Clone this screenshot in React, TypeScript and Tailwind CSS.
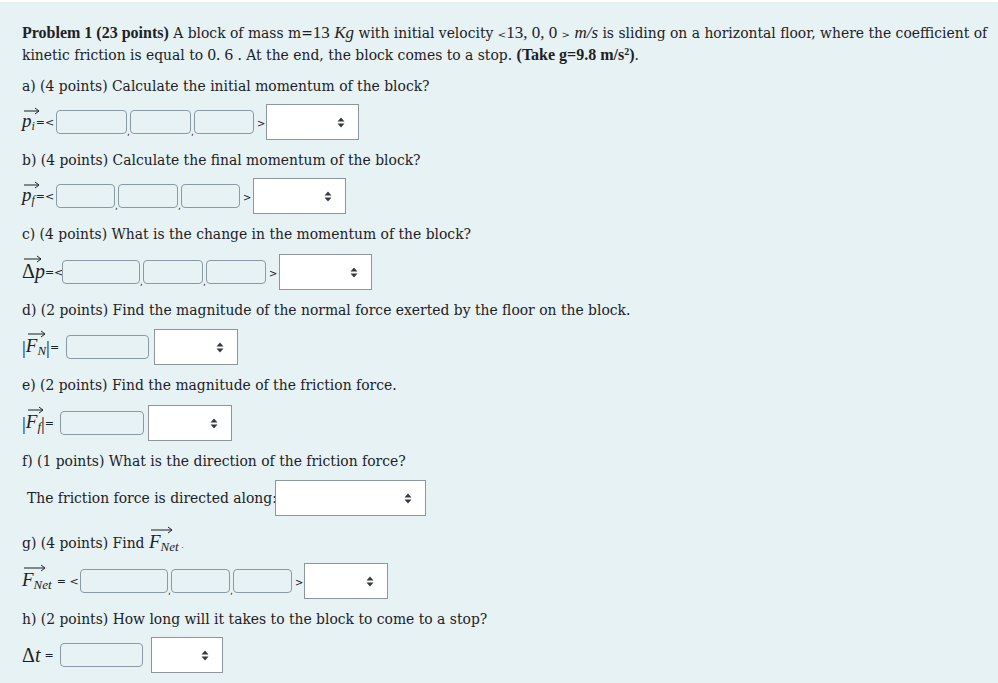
import type { ReactNode } from 'react'

const serif = "font-['DejaVu_Serif',serif]"
const math = "font-['Liberation_Serif',serif] leading-none"
const tmath = "font-['Liberation_Serif',serif] leading-[0] text-[17px]"
const bold = "font-['Liberation_Serif',serif] font-bold text-[16px] leading-[0]"

function Arrow({ w }: { w: number }) {
  return (
    <svg width={w} height="8" viewBox={`0 0 ${w} 8`} className="block">
      <path d={`M0 4 H${w - 1}`} stroke="#1d2125" strokeWidth="1" />
      <path d={`M${w - 5} 1 L${w - 1} 4 L${w - 5} 7`} stroke="#1d2125" strokeWidth="1" fill="none" />
    </svg>
  )
}

function Vec({ children, w, top }: { children: ReactNode; w: number; top: number }) {
  return (
    <span className="relative inline-block">
      <span className="absolute left-[2px]" style={{ top }}>
        <Arrow w={w} />
      </span>
      {children}
    </span>
  )
}

function Box({ w }: { w: number }) {
  return <span className="block h-[24px] rounded-[4px] border border-[#8a9aa4] bg-[#e7f2f5]" style={{ width: w }} />
}

function Comma() {
  return <span className="w-[3px] -mb-[3px] text-[9px] leading-none font-['DejaVu_Sans',sans-serif]">,</span>
}

function Select({ w }: { w: number }) {
  return (
    <span className="flex h-[36px] shrink-0 items-center justify-end border border-[#8f959c] bg-white pr-[13px]" style={{ width: w }}>
      <svg width="8" height="11" viewBox="0 0 8 11">
        <path d="M4 0.5 L7.5 4.5 L0.5 4.5 Z" fill="#343a40" />
        <path d="M4 10.5 L7.5 6.5 L0.5 6.5 Z" fill="#343a40" />
      </svg>
    </span>
  )
}

function Boxes({ boxes }: { boxes: number[] }) {
  return (
    <span className="flex h-[24px] items-end">
      <Box w={boxes[0]} />
      <Comma />
      <Box w={boxes[1]} />
      <Comma />
      <Box w={boxes[2]} />
    </span>
  )
}

function Gt({ w }: { w: number }) {
  return (
    <span className="ml-[3px] mt-[3px] text-[10px] font-['DejaVu_Sans',sans-serif]" style={{ width: w }}>
      &gt;
    </span>
  )
}

const small = "text-[11px] leading-none font-['DejaVu_Sans',sans-serif]"
const label = 'flex shrink-0 items-center whitespace-nowrap'

export default function App() {
  return (
    <div className="min-h-screen bg-white pt-[2px]">
      <div className={`min-h-[681px] bg-[#e7f2f5] pl-[22px] pt-[20px] text-[13.9px] leading-[22px] text-[#1d2125] ${serif}`}>
        {/* Problem statement */}
        <p>
          <b className={bold}>Problem 1 (23 points)</b> A block of mass m=<span className={tmath}>13</span>{' '}
          <i className={tmath}>Kg</i> with initial velocity <span className="text-[10px] leading-[0]">&lt;</span>
          <span className={tmath}>13, 0, 0</span> <span className="text-[10px] leading-[0]">&gt;</span>{' '}
          <i className={tmath}>m/s</i> is sliding on a horizontal floor, where the coefficient of kinetic friction is
          equal to <span className={tmath}>0. 6</span> . At the end, the block comes to a stop.{' '}
          <b className={bold}>
            (Take g=9.8 m/s<sup className="text-[10px]">2</sup>)
          </b>
          .
        </p>

        <p className="mt-[9px] mb-[7px]">a) (4 points) Calculate the initial momentum of the block?</p>
        <div className="flex h-[36px] items-center">
          <span className={`${label} w-[34px]`}>
            <Vec w={16} top={-4}>
              <i className={`${math} text-[19px]`}>
                p<sub className="text-[12px]">i</sub>
              </i>
            </Vec>
            <span className={`${small} ml-[1px]`}>=&lt;</span>
          </span>
          <Boxes boxes={[71, 61, 60]} />
          <Gt w={9} />
          <Select w={93} />
        </div>

        <p className="mt-[9px] mb-[7px]">b) (4 points) Calculate the final momentum of the block?</p>
        <div className="flex h-[36px] items-center">
          <span className={`${label} w-[34px]`}>
            <Vec w={16} top={-4}>
              <i className={`${math} text-[19px]`}>
                p<sub className="text-[12px]">f</sub>
              </i>
            </Vec>
            <span className={`${small} ml-[1px]`}>=&lt;</span>
          </span>
          <Boxes boxes={[59, 60, 59]} />
          <Gt w={10} />
          <Select w={93} />
        </div>

        <p className="mt-[9px] mb-[9px]">c) (4 points) What is the change in the momentum of the block?</p>
        <div className="flex h-[36px] items-center">
          <span className={`${label} w-[40px]`}>
            <Vec w={18} top={-6}>
              <span className={`${math} text-[20px]`}>
                Δ<i>p</i>
              </span>
            </Vec>
            <span className={small}>=&lt;</span>
          </span>
          <Boxes boxes={[78, 60, 60]} />
          <Gt w={10} />
          <Select w={93} />
        </div>

        <p className="mt-[9px] mb-[8px]">d) (2 points) Find the magnitude of the normal force exerted by the floor on the block.</p>
        <div className="flex h-[36px] items-center">
          <span className={`${label} w-[44px]`}>
            <span className={`${math} text-[19px]`}>|</span>
            <Vec w={18} top={-6}>
              <i className={`${math} text-[19px]`}>
                F<sub className="text-[13px]">N</sub>
              </i>
            </Vec>
            <span className={`${math} text-[19px]`}>|</span>
            <span className={small}>=</span>
          </span>
          <Box w={83} />
          <span className="w-[5px]" />
          <Select w={84} />
        </div>

        <p className="mt-[9px] mb-[9px]">e) (2 points) Find the magnitude of the friction force.</p>
        <div className="flex h-[36px] items-center">
          <span className={`${label} w-[38px]`}>
            <span className={`${math} text-[19px]`}>|</span>
            <Vec w={16} top={-6}>
              <i className={`${math} text-[19px]`}>
                F<sub className="text-[13px]">f</sub>
              </i>
            </Vec>
            <span className={`${math} text-[19px]`}>|</span>
            <span className={small}>=</span>
          </span>
          <Box w={84} />
          <span className="w-[4px]" />
          <Select w={84} />
        </div>

        <p className="mt-[9px] mb-[8px]">f) (1 points) What is the direction of the friction force?</p>
        <div className="flex h-[36px] items-center pl-[5px]">
          <span className="w-[248px] shrink-0 whitespace-nowrap">The friction force is directed along:</span>
          <Select w={151} />
        </div>

        <p className="mt-[16px] mb-[6px]">
          g) (4 points) Find{' '}
          <Vec w={22} top={-6}>
            <i className={`${math} text-[19px]`}>
              F<sub className="text-[13px]">Net</sub>
            </i>
          </Vec>
          <span className="text-[8px]"> .</span>
        </p>
        <div className="flex h-[36px] items-center">
          <span className={`${label} w-[58px]`}>
            <Vec w={22} top={-6}>
              <i className={`${math} text-[19px]`}>
                F<sub className="text-[13px]">Net</sub>
              </i>
            </Vec>
            <span className={`${small} ml-[5px]`}>= &lt;</span>
          </span>
          <Boxes boxes={[88, 59, 59]} />
          <Gt w={9} />
          <Select w={84} />
        </div>

        <p className="mt-[9px] mb-[7px]">h) (2 points) How long will it takes to the block to come to a stop?</p>
        <div className="flex h-[36px] items-center">
          <span className={`${label} w-[38px]`}>
            <span className={`${math} text-[20px]`}>
              Δ<i>t</i>
            </span>
            <span className={`${small} ml-[4px]`}>=</span>
          </span>
          <Box w={83} />
          <span className="w-[8px]" />
          <Select w={72} />
        </div>
      </div>
    </div>
  )
}
